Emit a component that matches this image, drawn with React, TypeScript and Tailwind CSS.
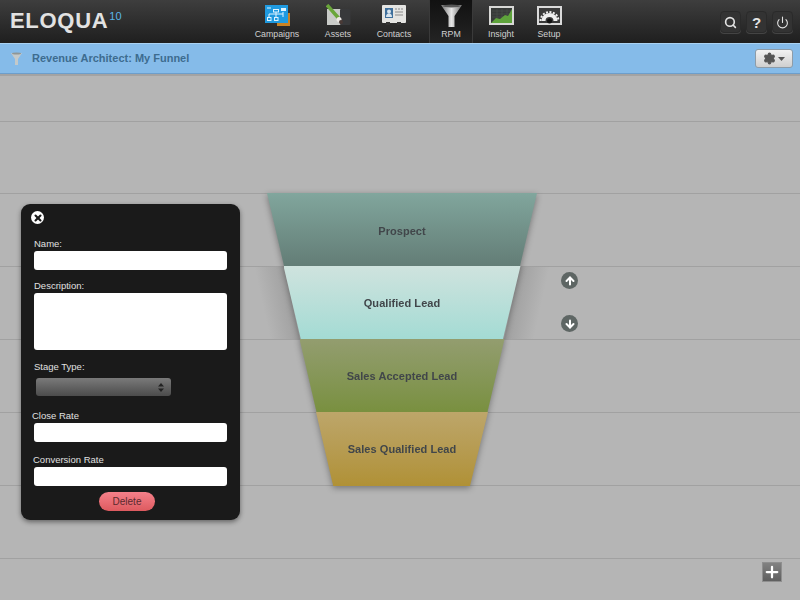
import { Search, Power, X, ArrowUp, ArrowDown, Plus, Settings } from "lucide-react";

const navItems = [
  { label: "Campaigns", width: "w-[80px]", icon: <CampaignsIcon /> },
  { label: "Assets", width: "w-[42px]", icon: <AssetsIcon /> },
  { label: "Contacts", width: "w-[70px]", icon: <ContactsIcon /> },
  { label: "RPM", width: "w-[44px]", icon: <FunnelIcon />, active: true },
  { label: "Insight", width: "w-[56px]", icon: <InsightIcon /> },
  { label: "Setup", width: "w-[40px]", icon: <SetupIcon /> },
];

const stages = [
  { label: "Prospect", className: "w-[270px] h-[73px] pt-[3px] bg-gradient-to-b from-[#81a69d] to-[#637d76] [clip-path:polygon(0_0,100%_0,93.7%_100%,6.3%_100%)]" },
  { label: "Qualified Lead", className: "w-[237px] h-[73px] pt-[1px] bg-gradient-to-b from-[#cfe3de] to-[#a3dbd4] [clip-path:polygon(0_0,100%_0,92.6%_100%,7.3%_100%)]" },
  { label: "Sales Accepted Lead", className: "w-[205px] h-[73px] pt-[1px] bg-gradient-to-b from-[#939d6f] to-[#79903f] [clip-path:polygon(0_0,100%_0,91.7%_100%,8.3%_100%)]" },
  { label: "Sales Qualified Lead", className: "w-[172px] h-[74px] bg-gradient-to-b from-[#bda66a] to-[#b09135] [clip-path:polygon(0_0,100%_0,89.5%_100%,10%_100%)]" },
];

function CampaignsIcon() {
  return (
    <svg width="25" height="21" viewBox="0 0 25 21">
      <rect x="12" y="8" width="13" height="13" fill="#c98224" />
      <rect x="0" y="0" width="23" height="18" fill="#1f9ae0" />
      <path d="M11 7v2M4 9h14M4 9v3M11 9v3M18 7v5" stroke="#dff3ff" strokeWidth="1" fill="none" />
      <rect x="8.500" y="4.500" width="5" height="2.500" fill="none" stroke="#dff3ff" />
      <rect x="2.500" y="12.500" width="3.500" height="3" fill="none" stroke="#dff3ff" />
      <rect x="9.500" y="12.500" width="3.500" height="3" fill="none" stroke="#dff3ff" />
      <rect x="16" y="3" width="5" height="3" fill="#dff3ff" />
      <path d="M2 3h4" stroke="#dff3ff" />
    </svg>
  );
}

function AssetsIcon() {
  return (
    <svg width="25" height="22" viewBox="0 0 25 22">
      <rect x="1" y="5" width="14" height="16" fill="#c9cbc8" />
      <rect x="14" y="5" width="10.500" height="16" rx="1" fill="#38393b" />
      <path d="M1 1l11.500 13" stroke="#6aa63a" strokeWidth="3.500" />
      <circle cx="13" cy="15.500" r="2.500" fill="#ece8e4" />
      <circle cx="15" cy="18" r="2" fill="#4a3a36" />
    </svg>
  );
}

function ContactsIcon() {
  return (
    <svg width="24" height="22" viewBox="0 0 24 22">
      <rect x="0" y="1" width="24" height="18" rx="1" fill="#e4e4e2" />
      <rect x="3" y="4" width="8" height="10" fill="#3e6f9c" />
      <circle cx="7" cy="7.500" r="2" fill="#d8e4ee" />
      <path d="M4 13c0-5 6-5 6 0z" fill="#d8e4ee" />
      <path d="M13 5h2M16 5h2M19 5h2M13 8h8M13 11h8" stroke="#8a8a8a" strokeWidth="1.200" />
      <rect x="4" y="18" width="4" height="3" fill="#333" />
      <rect x="15" y="18" width="4" height="3" fill="#333" />
    </svg>
  );
}

function FunnelIcon() {
  return (
    <svg width="21" height="23" viewBox="0 0 21 23">
      <defs>
        <linearGradient id="funnelFill" x1="0" x2="1" y1="0" y2="0">
          <stop offset="0" stopColor="#6f6f6f" />
          <stop offset="0.5" stopColor="#e6e6e6" />
          <stop offset="1" stopColor="#6a6a6a" />
        </linearGradient>
      </defs>
      <path d="M0 1h21L13.500 12v11h-6V12z" fill="url(#funnelFill)" />
      <ellipse cx="10.500" cy="2" rx="9" ry="1.500" fill="#565656" />
    </svg>
  );
}

function InsightIcon() {
  return (
    <svg width="25" height="19" viewBox="0 0 25 19">
      <rect x="0" y="0" width="25" height="19" fill="#d8d8d6" />
      <rect x="2" y="2" width="21" height="15" fill="#373a38" />
      <path d="M3 5h19M3 8h19M3 11h19M8 3v13M13 3v13M18 3v13" stroke="#4d504e" strokeWidth="0.600" />
      <path d="M2 17l5-5 4 1 5-4 3 1 4-7v14z" fill="#5ea33b" />
    </svg>
  );
}

function SetupIcon() {
  return (
    <svg width="25" height="19" viewBox="0 0 25 19">
      <rect x="0" y="0" width="25" height="19" fill="#dadada" />
      <rect x="2" y="2" width="21" height="15" fill="#3a3a3a" />
      <path d="M4.500 15a8 8 0 0 1 16 0h-4a4 4 0 0 0-8 0z" fill="#efefef" />
      <path d="M3.500 15a9 9 0 0 1 18 0" fill="none" stroke="#efefef" strokeWidth="2" strokeDasharray="2 1.500" />
      <circle cx="12.500" cy="15" r="2.500" fill="#111" />
    </svg>
  );
}

function NavItem({ label, icon, width, active }: { label: string; icon: React.ReactNode; width: string; active?: boolean }) {
  return (
    <div className={`flex h-[43px] flex-col items-center pt-[4px] ${width} ${active ? "bg-gradient-to-b from-[#111] to-[#242424] shadow-[inset_1px_0_0_#3a3a3a,inset_-1px_0_0_#3a3a3a]" : ""}`}>
      <div className="flex h-[22px] items-center justify-center">{icon}</div>
      <span className="mt-[3px] text-[8.800px] leading-[10px] text-[#d0d0d0]">{label}</span>
    </div>
  );
}

function HeaderButton({ children }: { children: React.ReactNode }) {
  return (
    <div className="flex h-[22px] w-[21px] items-center justify-center rounded-[4px] border border-[#2a2a2a] bg-[#333] text-[#e4e4e4] shadow-[0_1px_0_#444]">
      {children}
    </div>
  );
}

function Field({ label, className = "h-[19px]", labelClass = "ml-[13px]" }: { label: string; className?: string; labelClass?: string }) {
  return (
    <div>
      <div className={`${labelClass} text-[9.500px] leading-[12px] text-[#e0e0e0]`}>{label}</div>
      <div className={`ml-[13px] mt-[1px] w-[193px] rounded-[3px] bg-white ${className}`} />
    </div>
  );
}

export default function App() {
  return (
    <div className="relative flex h-[600px] w-[800px] flex-col overflow-hidden bg-[#b5b5b5] font-['Liberation_Sans',Arial,sans-serif]">
      <header className="flex h-[43px] items-stretch bg-gradient-to-b from-[#3e3e3e] to-[#1f1f1f]">
        <div className="flex w-[237px] items-start pl-[10px] pt-[10px]">
          <span className="text-[22px] font-bold leading-[22px] tracking-[0.7px] text-[#e2e2e2]">ELOQUA</span>
          <span className="ml-[1px] mt-[1px] text-[11px] leading-[11px] text-[#5ab5e8]">10</span>
        </div>
        <nav className="flex">
          {navItems.map((item) => (
            <NavItem key={item.label} label={item.label} icon={item.icon} width={item.width} active={item.active} />
          ))}
        </nav>
        <div className="ml-auto flex items-center gap-[5px] pr-[7px] pt-[1px]">
          <HeaderButton><Search size={13} strokeWidth={3} /></HeaderButton>
          <HeaderButton><span className="text-[15px] font-bold leading-none">?</span></HeaderButton>
          <HeaderButton><Power size={13} strokeWidth={2} /></HeaderButton>
        </div>
      </header>

      <div className="flex h-[31px] items-center justify-between border-b border-t border-b-[#6d9ecb] border-t-[#a9d2f2] bg-[#85bbe9] pl-[11px] pr-[7px]">
        <div className="flex items-center gap-[10px]">
          <svg width="11" height="14" viewBox="0 0 11 14">
            <path d="M0 1h11L7 7v6H4V7z" fill="#c4c9c9" />
            <ellipse cx="5.500" cy="1.500" rx="4.500" ry="1" fill="#8f9696" />
          </svg>
          <span className="text-[11px] font-bold text-[#3d6c8f]">Revenue Architect: My Funnel</span>
        </div>
        <div className="flex h-[19px] w-[38px] items-center justify-center gap-[2px] rounded-[3px] border border-[#8e9ca8] bg-gradient-to-b from-[#f2f2f2] to-[#cfcfcf] text-[#555]">
          <Settings size={13} fill="#555" strokeWidth={2} />
          <svg width="7" height="4" viewBox="0 0 7 4">
            <path d="M0 0h7L3.500 4z" fill="#555" />
          </svg>
        </div>
      </div>

      <div className="flex flex-1 flex-col">
        <div className="h-[2px] bg-[#a3a3a3]" />
        <div className="h-[46px] border-b border-[#a1a1a1]" />
        <div className="h-[72px] border-b border-[#a1a1a1]" />
        {[0, 1, 2, 3, 4].map((row) => (
          <div key={row} className="h-[73px] border-b border-[#a1a1a1]" />
        ))}
      </div>

      <div className="absolute left-[262px] top-[266px] h-[73px] w-[30px] skew-x-[12.400deg] bg-gradient-to-r from-transparent to-[#a0a0a0]" />
      <div className="absolute left-[512px] top-[266px] h-[73px] w-[30px] -skew-x-[12.400deg] bg-gradient-to-l from-transparent to-[#a0a0a0]" />

      <div className="absolute left-[267px] top-[193px] flex w-[270px] flex-col items-center drop-shadow-[0_2px_3px_rgba(0,0,0,0.35)]">
        {stages.map((stage) => (
          <div key={stage.label} className={`flex items-center justify-center text-[11px] font-bold tracking-[0.05px] text-[#41464a] ${stage.className}`}>
            {stage.label}
          </div>
        ))}
      </div>

      <div className="absolute left-[561px] top-[272px] flex h-[17px] w-[17px] items-center justify-center rounded-full bg-[#5e6664] text-white">
        <ArrowUp size={12} strokeWidth={4} />
      </div>
      <div className="absolute left-[561px] top-[315px] flex h-[17px] w-[17px] items-center justify-center rounded-full bg-[#5e6664] text-white">
        <ArrowDown size={12} strokeWidth={4} />
      </div>

      <aside className="absolute left-[21px] top-[204px] h-[316px] w-[219px] rounded-[9px] bg-[#1a1a1a] shadow-[0_2px_5px_rgba(0,0,0,0.45)]">
        <div className="ml-[10px] mt-[7px] flex h-[13px] w-[13px] items-center justify-center rounded-full bg-white text-[#1a1a1a]">
          <X size={10} strokeWidth={5} />
        </div>
        <div className="mt-[14px]">
          <Field label="Name:" />
        </div>
        <div className="mt-[10px]">
          <Field label="Description:" className="h-[57px]" />
        </div>
        <div className="ml-[13px] mt-[11px] text-[9.500px] leading-[12px] text-[#e0e0e0]">Stage Type:</div>
        <div className="ml-[15px] mt-[5px] flex h-[18px] w-[135px] items-center justify-end rounded-[3px] bg-gradient-to-b from-[#7a7a7a] to-[#4c4c4c] pr-[7px]">
          <svg width="6" height="9" viewBox="0 0 6 9">
            <path d="M3 0l3 3.500H0zM3 9L0 5.500h6z" fill="#222" />
          </svg>
        </div>
        <div className="mt-[14px]">
          <Field label="Close Rate" labelClass="ml-[11px]" />
        </div>
        <div className="mt-[12px]">
          <Field label="Conversion Rate" labelClass="ml-[12px]" />
        </div>
        <div className="ml-[78px] mt-[6px] flex h-[19px] w-[56px] items-center justify-center rounded-full bg-gradient-to-b from-[#f5808a] to-[#dd5a5f] text-[10px] text-[#5a2a2e]">
          Delete
        </div>
      </aside>

      <div className="absolute left-[762px] top-[562px] flex h-[20px] w-[20px] items-center justify-center border border-[#8f8f8f] bg-gradient-to-b from-[#828282] to-[#5f5f5f] text-white">
        <Plus size={18} strokeWidth={3} />
      </div>
    </div>
  );
}
